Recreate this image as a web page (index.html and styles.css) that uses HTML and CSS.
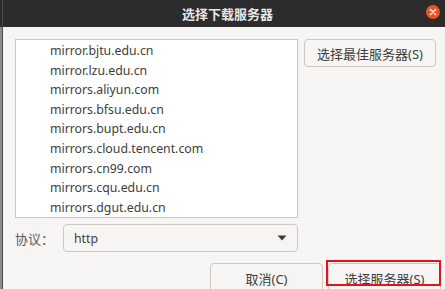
FILE: index.html
```html
<!DOCTYPE html>
<html lang="zh-CN">
<head>
    <meta charset="UTF-8">
    <title>选择下载服务器</title>
    <link rel="stylesheet" href="styles.css">
</head>
<body>

<div class="desk">
    <div class="edge"></div>

    <div class="window">
        <div class="titlebar">
            <span class="title">选择下载服务器</span>
            <span class="close">
                <svg width="14" height="14" viewBox="0 0 14 14">
                    <circle cx="7" cy="7" r="7" fill="#e95420"/>
                    <path d="M4.4 4.4 L9.6 9.6 M9.6 4.4 L4.4 9.6" stroke="#fff" stroke-width="1.4" stroke-linecap="round"/>
                </svg>
            </span>
        </div>

        <div class="content">
            <div class="top-row">
                <ul class="mirror-list">
                    <li>mirror.bjtu.edu.cn</li>
                    <li>mirror.lzu.edu.cn</li>
                    <li>mirrors.aliyun.com</li>
                    <li>mirrors.bfsu.edu.cn</li>
                    <li>mirrors.bupt.edu.cn</li>
                    <li>mirrors.cloud.tencent.com</li>
                    <li>mirrors.cn99.com</li>
                    <li>mirrors.cqu.edu.cn</li>
                    <li>mirrors.dgut.edu.cn</li>
                </ul>
                <button class="btn best-btn">选择最佳服务器(S)</button>
            </div>

            <div class="proto-row">
                <span class="proto-label">协议：</span>
                <div class="combo">
                    <span>http</span>
                    <svg width="10" height="6" viewBox="0 0 10 6"><path d="M0.5 0.5 H9.5 L5 5.5 Z" fill="#3c3c3c"/></svg>
                </div>
            </div>

            <div class="actions">
                <button class="btn action-btn">取消(C)</button>
                <div class="marked">
                    <button class="btn action-btn">选择服务器(S)</button>
                    <div class="mark"></div>
                </div>
            </div>
        </div>
    </div>
</div>

</body>
</html>
```

FILE: styles.css
```css
/* Page */
body {
    margin: 0;
    font-family: "Noto Sans", "Noto Sans CJK SC", sans-serif;
    font-size: 13px;
    color: #3d3d3d;
    background: #f6f5f4;
    overflow: hidden;
}

.desk {
    display: flex;
    height: 289px;
}

/* Bit of the window behind */
.edge {
    width: 3px;
    background: linear-gradient(to bottom, #2c2c2c 0, #2c2c2c 27px, #8c8c8c 27px);
    border-right: 1px solid #4a4a4a;
    box-sizing: border-box;
}

.window {
    flex: 1;
    display: flex;
    flex-direction: column;
    background: #f6f5f4;
    overflow: hidden;
}

/* Title bar */
.titlebar {
    flex-shrink: 0;
    height: 27px;
    background: #2c2c2c;
    display: flex;
    align-items: center;
    justify-content: center;
    position: relative;
}

.title {
    color: #e8e8e7;
    font-weight: bold;
    font-size: 13px;
    margin-left: 7px;
}

.close {
    position: absolute;
    right: 5px;
    top: 5px;
    height: 14px;
}

/* Content */
.content {
    flex-shrink: 0;
    padding: 12px 0 0 12px;
    display: flex;
    flex-direction: column;
}

.top-row {
    display: flex;
    align-items: flex-start;
    gap: 6px;
}

.mirror-list {
    list-style: none;
    margin: 0;
    padding: 0 0 0 34px;
    width: 283px;
    height: 179px;
    box-sizing: border-box;
    background: #fff;
    border: 1px solid #cdc7c2;
    overflow: hidden;
    font-size: 12.3px;
}

.mirror-list li {
    height: 19.6px;
    line-height: 19.6px;
    white-space: nowrap;
}

.mirror-list li:first-child {
    margin-top: 1px;
}

.btn {
    font-family: inherit;
    font-size: 13px;
    color: #3d3d3d;
    background: #f6f5f4;
    border: 1px solid #cdc7c2;
    border-radius: 4px;
    padding: 0;
}

.best-btn {
    width: 132px;
    height: 28px;
}

/* Protocol */
.proto-row {
    display: flex;
    align-items: center;
    margin-top: 6px;
}

.proto-label {
    width: 48px;
    color: #5c5c5c;
}

.combo {
    width: 235px;
    height: 28px;
    box-sizing: border-box;
    border: 1px solid #cdc7c2;
    border-radius: 4px;
    display: flex;
    align-items: center;
    justify-content: space-between;
    padding: 0 10px 0 10px;
    font-size: 12.3px;
}

/* Dialog buttons */
.actions {
    display: flex;
    justify-content: flex-end;
    gap: 5px;
    margin-top: 11px;
    padding-right: 4px;
}

.action-btn {
    width: 113px;
    height: 30px;
    border-radius: 4px 4px 0 0;
}

.marked {
    position: relative;
}

/* Red annotation box */
.mark {
    position: absolute;
    left: -2px;
    top: -3px;
    width: 115px;
    height: 26px;
    border: 2px solid #e0141e;
    box-sizing: border-box;
}
```
